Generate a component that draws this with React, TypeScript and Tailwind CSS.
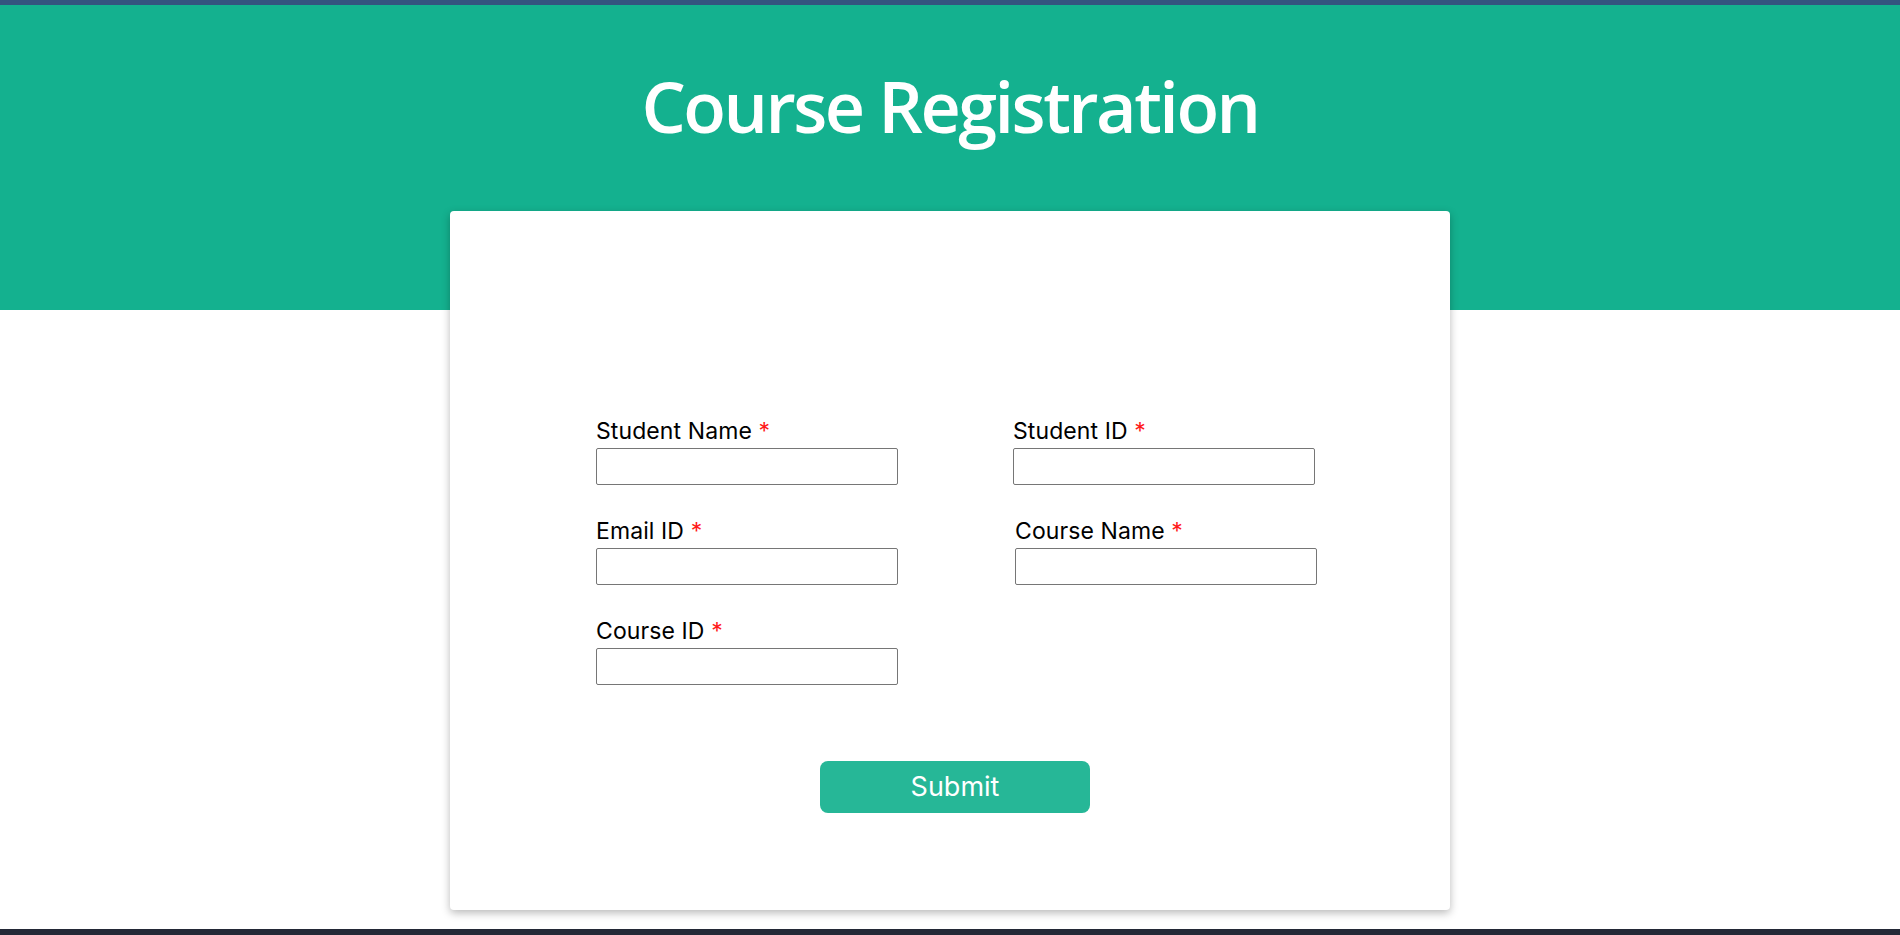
import React from 'react'

const fields = [
    { label: 'Student Name', shift: false },
    { label: 'Student ID', shift: false },
    { label: 'Email ID', shift: false },
    { label: 'Course Name', shift: true },
    { label: 'Course ID', shift: false },
]

function Field({ label, shift }: { label: string; shift: boolean }) {
    return (
        <div className={shift ? 'ml-[2px] flex flex-col' : 'flex flex-col'}>
            <label className="mb-[3px] text-[23px] leading-[28px] tracking-[0.1px] text-black font-['Inter',sans-serif]">
                {label} <span className="text-[#ff1a1a]">*</span>
            </label>
            <input
                type="text"
                className="h-[37px] w-[302px] rounded-[2px] border border-[#767676] bg-white px-2 outline-none"
            />
        </div>
    )
}

export default function App() {
    return (
        <div className="min-h-screen bg-white flex flex-col">
            <div className="h-[5px] bg-[#34547f]" />
            <header className="h-[305px] bg-[#14b18f] pt-[59px]">
                <h1 className="text-center text-[70px] leading-[84px] font-semibold tracking-[-2.5px] text-white font-['Open_Sans',sans-serif]">
                    Course Registration
                </h1>
            </header>

            <div className="mx-auto -mt-[99px] w-[1000px] rounded-[4px] bg-white pt-[206px] pb-[97px] pl-[146px] shadow-[0_3px_8px_rgba(0,0,0,0.28)]">
                <div className="grid grid-cols-[302px_302px] gap-x-[115px] gap-y-[32px]">
                    {fields.map((f) => (
                        <Field key={f.label} label={f.label} shift={f.shift} />
                    ))}
                </div>
                <div className="mt-[76px] flex justify-center pr-[136px]">
                    <button
                        type="button"
                        className="h-[52px] w-[270px] rounded-[8px] bg-[#26b797] text-[27px] text-white font-['Inter',sans-serif]"
                    >
                        Submit
                    </button>
                </div>
            </div>

            <div className="mt-[19px] h-[6px] bg-[#232836]" />
        </div>
    )
}
